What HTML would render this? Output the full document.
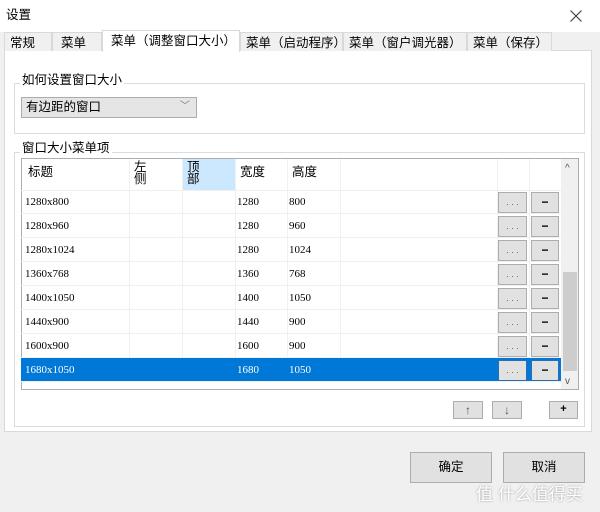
<!DOCTYPE html><html><head><meta charset="utf-8"><style>
*{box-sizing:border-box;margin:0;padding:0}
body{width:600px;height:512px;background:#f0f0f0;font-family:"Liberation Sans","Noto Sans CJK SC",sans-serif;font-size:12px;line-height:15px;color:#000;position:relative;overflow:hidden}
.a{position:absolute}
.tab{position:absolute;top:32px;height:19px;border:1px solid #d9d9d9;border-bottom:none;background:#f0f0f0;padding:3px 0 0 5px;font-size:12.5px;white-space:nowrap}
.grp{position:absolute;border:1px solid #dcdcdc}
.lbl{position:absolute;background:#fff;padding:0 2px;font-size:12.5px}
.btn{position:absolute;background:#e1e1e1;border:1px solid #adadad;text-align:center}
.row{position:absolute;left:21px;width:540px;height:24px;border-bottom:1px solid #f0f0f0;font-size:11px;font-family:"Liberation Serif","Noto Sans CJK SC",serif}
.row span{position:absolute;top:5px}
.vl{position:absolute;top:158px;height:224px;width:1px;background:#f0f0f0}
</style></head><body>
<div class="a" style="left:0;top:0;width:600px;height:32px;background:#fff"></div>
<div class="a" style="left:6px;top:8px;font-size:12.5px">设置</div>
<svg class="a" style="left:570px;top:10px" width="12" height="12"><path d="M0.5 0.5L11.5 11.5M11.5 0.5L0.5 11.5" stroke="#333" stroke-width="1"/></svg>
<div class="a" style="left:4px;top:50px;width:588px;height:382px;background:#fff;border:1px solid #d9d9d9"></div>
<div class="tab" style="left:4px;width:48px">常规</div>
<div class="tab" style="left:52px;width:50px;padding-left:8px">菜单</div>
<div class="tab" style="left:102px;top:30px;height:22px;width:138px;background:#fff;padding-top:3px;padding-left:8px">菜单（调整窗口大小）</div>
<div class="tab" style="left:240px;width:103px">菜单（启动程序）</div>
<div class="tab" style="left:343px;width:124px">菜单（窗户调光器）</div>
<div class="tab" style="left:467px;width:85px">菜单（保存）</div>
<div class="grp" style="left:14px;top:83px;width:571px;height:51px"></div>
<div class="lbl" style="left:20px;top:73px">如何设置窗口大小</div>
<div class="a" style="left:21px;top:97px;width:176px;height:21px;background:#e5e5e5;border:1px solid #acacac;padding:2px 0 0 4px;font-size:12.5px">有边距的窗口<span class="a" style="left:158px;top:1px;color:#777;font-size:10px">﹀</span></div>
<div class="grp" style="left:14px;top:152px;width:571px;height:275px"></div>
<div class="lbl" style="left:20px;top:141px">窗口大小菜单项</div>
<div class="a" style="left:21px;top:158px;width:558px;height:232px;border:1px solid #adadad;background:#fff"></div>
<div class="a" style="left:182px;top:159px;width:53px;height:31px;background:#cce8ff"></div>
<div class="a" style="left:28px;top:165px;font-size:12.5px">标题</div>
<div class="a" style="left:134px;top:161px;font-size:12.5px;line-height:12px;width:14px">左<br>侧</div>
<div class="a" style="left:187px;top:161px;font-size:12.5px;line-height:12px;width:14px">顶<br>部</div>
<div class="a" style="left:240px;top:165px;font-size:12.5px">宽度</div>
<div class="a" style="left:292px;top:165px;font-size:12.5px">高度</div>
<div class="vl" style="left:129px;top:159px;height:223px"></div><div class="vl" style="left:182px;top:159px;height:223px"></div><div class="vl" style="left:235px;top:159px;height:223px"></div><div class="vl" style="left:287px;top:159px;height:223px"></div><div class="vl" style="left:340px;top:159px;height:223px"></div><div class="vl" style="left:497px;top:159px;height:223px"></div><div class="vl" style="left:529px;top:159px;height:223px"></div>
<div class="a" style="left:21px;top:190px;width:540px;height:1px;background:#f0f0f0"></div>
<div class="a" style="left:21px;top:358px;width:540px;height:24px;background:#0078d7"></div>
<div class="a" style="left:561px;top:159px;width:17px;height:230px;background:#f0f0f0"></div>
<div class="a" style="left:563px;top:272px;width:14px;height:99px;background:#cdcdcd"></div>
<div class="a" style="left:565px;top:161px;font-size:10px;color:#555">^</div>
<div class="a" style="left:565px;top:374px;font-size:10px;color:#555">v</div>
<div id="rows"></div>
<script>
var d=[["1280x800","1280","800"],["1280x960","1280","960"],["1280x1024","1280","1024"],["1360x768","1360","768"],["1400x1050","1400","1050"],["1440x900","1440","900"],["1600x900","1600","900"],["1680x1050","1680","1050"]];
var h="";d.forEach(function(r,i){var y=190+i*24,c=i==7?"color:#fff;":"";
h+='<div class="row" style="top:'+y+'px;'+c+'"><span style="left:4px">'+r[0]+'</span><span style="left:216px">'+r[1]+'</span><span style="left:268px">'+r[2]+'</span></div>';
h+='<div class="btn" style="left:498px;top:'+(y+2)+'px;width:29px;height:21px;font-size:9px;color:#666;line-height:18px;'+(i==7?'border-color:#2a6db0':'')+'">. . .</div>';
h+='<div class="btn" style="left:531px;top:'+(y+2)+'px;width:28px;height:21px;font-weight:bold;line-height:18px;'+(i==7?'border-color:#2a6db0':'')+'">−</div>';});
document.getElementById("rows").innerHTML=h;
</script>
<div class="btn" style="left:453px;top:401px;width:30px;height:18px;line-height:16px;color:#555">↑</div>
<div class="btn" style="left:492px;top:401px;width:30px;height:18px;line-height:16px;color:#555">↓</div>
<div class="btn" style="left:549px;top:401px;width:29px;height:18px;line-height:15px;font-weight:bold;font-size:11px">+</div>
<div class="btn" style="left:410px;top:452px;width:82px;height:31px;line-height:29px;font-size:12.5px">确定</div>
<div class="btn" style="left:503px;top:452px;width:82px;height:31px;line-height:29px;font-size:12.5px">取消</div>
<div class="a" style="left:476px;top:484px;font-size:17px;line-height:22px;color:#fff;text-shadow:0 0 2px #999">值 什么值得买</div>
</body></html>
